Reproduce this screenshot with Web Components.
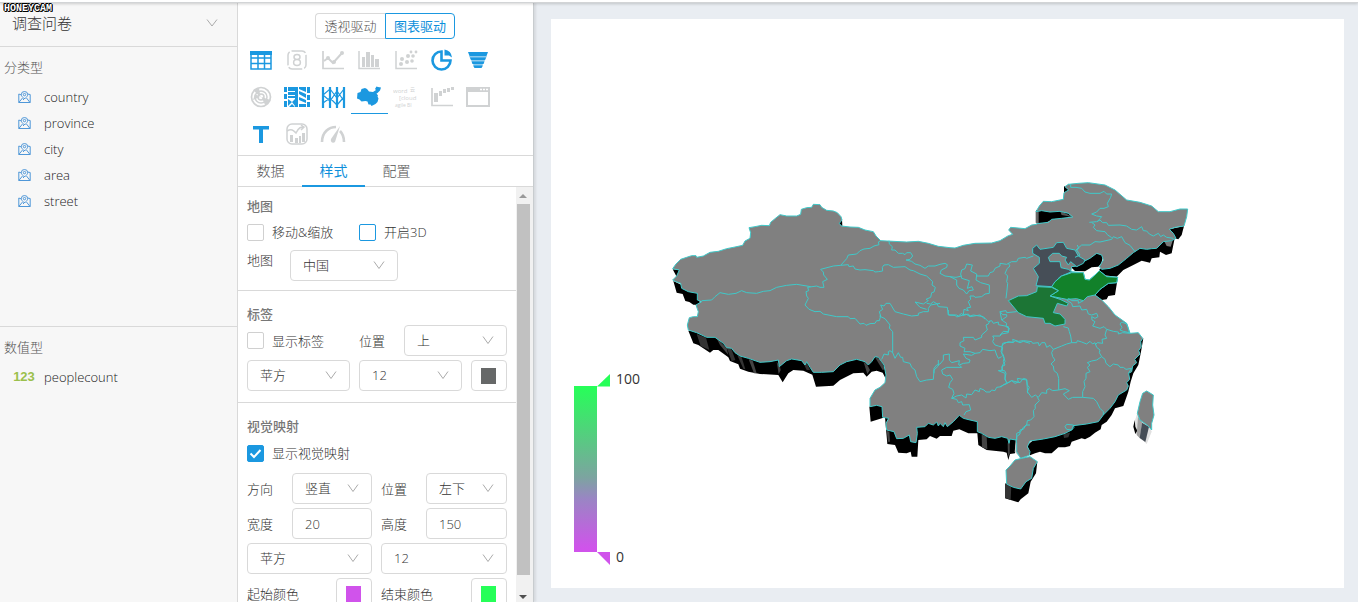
<!DOCTYPE html>
<html lang="zh-CN">
<head>
<meta charset="utf-8">
<title>调查问卷</title>
<style>
html, body { margin: 0; height: 100%; }
body { font: 300 13px/20px "Open Sans", "Noto Sans CJK SC", sans-serif; color: #333; background: #e9edf2; overflow: hidden; }
</style>
</head>
<body>
<bi-app></bi-app>

<template id="t-app">
<style>
:host { display: flex; flex-direction: column; height: 100vh; position: relative; }
.top { flex: none; height: 2px; background: #fff; border-bottom: 1px solid #d2d4d6; box-shadow: 0 1px 3px rgba(0,0,0,.18); z-index: 2; }
main { flex: 1; min-height: 0; display: grid; grid-template-columns: 238px 296px minmax(0, 1fr); }
.mark { position: absolute; left: 4px; top: 3px; z-index: 3; font: bold 10px/11px "Liberation Mono", monospace; color: #fff; text-shadow: 1px 0 #000, -1px 0 #000, 0 1px #000, 0 -1px #000, 1px 1px #000, -1px -1px #000; }
</style>
<div class="top"></div>
<span class="mark">HONEYCAM</span>
<main>
  <field-panel></field-panel>
  <config-panel></config-panel>
  <chart-stage></chart-stage>
</main>
</template>

<template id="t-fields">
<style>
:host { display: flex; flex-direction: column; min-height: 0; overflow: hidden; background: #f7f7f7; border-right: 1px solid #d9d9d9; }
header { flex: none; box-sizing: border-box; height: 44px; padding: 0 19px 4px 12px; border-bottom: 1px solid #d9d9d9; display: flex; align-items: center; justify-content: space-between; font-size: 15px; }
header svg { width: 12px; height: 8px; fill: none; stroke: #aaa; }
section { padding: 10px 4px 0; }
.dims { flex: none; box-sizing: border-box; height: 280px; border-bottom: 1px solid #d9d9d9; }
h2 { margin: 0 0 7px; font-size: 13px; font-weight: 300; color: #555; }
ul { margin: 0; padding: 0; list-style: none; }
</style>
<header><span>调查问卷</span><svg viewBox="0 0 12 8"><path d="M1 .5 6 7 11 .5"/></svg></header>
<section class="dims">
  <h2>分类型</h2>
  <ul>
    <li><field-item>country</field-item></li>
    <li><field-item>province</field-item></li>
    <li><field-item>city</field-item></li>
    <li><field-item>area</field-item></li>
    <li><field-item>street</field-item></li>
  </ul>
</section>
<section>
  <h2>数值型</h2>
  <ul><li><field-item kind="number">peoplecount</field-item></li></ul>
</section>
</template>

<template id="t-field">
<style>
:host { display: flex; align-items: center; height: 26px; color: #222; }
.icon { width: 40px; display: flex; justify-content: center; }
svg { width: 13px; height: 13px; fill: none; stroke: #4f97d8; stroke-width: 1; }
b { display: none; font: bold 13px/20px "Liberation Sans", sans-serif; color: #9bc04c; }
:host([kind=number]) svg { display: none; }
:host([kind=number]) b { display: block; }
</style>
<span class="icon"><svg viewBox="0 0 13 13"><path d="M3.500 4 .8 3v8.500h11.400V3.500L9.500 3M.8 11.500 4.500 7M5 9l2-2M8.500 7l3.500 4.500"/><path d="M6.500 8C4.500 6 3.300 5 3.300 3.600a3.200 3.100 0 0 1 6.400 0C9.700 5 8.500 6 6.500 8Z"/><circle cx="6.500" cy="3.600" r="1.200"/></svg><b>123</b></span>
<slot></slot>
</template>

<template id="t-config">
<style>
:host { display: flex; flex-direction: column; min-height: 0; box-sizing: border-box; background: #fff; border-right: 1px solid #c8cccf; box-shadow: 2px 0 2px rgba(0,0,0,.08); z-index: 1; }
.mode { display: flex; justify-content: center; padding: 10px 1px 3px 0; }
.mode button { width: 70px; height: 26px; padding: 0; font: inherit; line-height: 24px; background: #fff; color: #555; border: 1px solid #d9d9d9; }
.mode button:first-child { border-radius: 4px 0 0 4px; border-right: 0; }
.mode button:last-child { border-radius: 0 4px 4px 0; border-color: #1b98e0; color: #0d8fdb; font-weight: 400; }
.types { display: grid; grid-template-columns: repeat(7, 1fr); grid-auto-rows: 37px; padding: 0 37px 2px 5px; border-bottom: 1px solid #d9d9d9; }
.tabs { display: flex; height: 30px; border-bottom: 1px solid #d9d9d9; padding-left: 1px; }
.tabs button { width: 63px; height: 31px; padding: 0; border: 0; border-bottom: 2px solid transparent; background: none; font: inherit; font-size: 14px; line-height: 29px; color: #555; }
.tabs button.on { color: #0d8fdb; border-color: #1b98e0; font-weight: 400; }
.body { flex: 1; min-height: 0; display: flex; }
.form { flex: 1; overflow: hidden; }
section { padding: 13px 9px 11px; border-bottom: 1px solid #d9d9d9; }
section:first-child { padding: 9px 9px; }
h2 { margin: 0 0 1px; font-size: 13px; line-height: 20px; font-weight: 500; color: #777; }
section:first-child h2 { margin: 0; }
.row { display: flex; gap: 9px; margin-bottom: 4px; }
.row:last-child { margin-bottom: 0; }
.checks { height: 32px; margin-bottom: 4px; align-items: center; }
.checks.tight { margin-bottom: 2px; }
.half { display: grid; grid-template-columns: 125px 1fr; }
tick-box.w { width: 103px; }
pick-field.s { width: 103px; flex: none; }
pick-field.m { width: 151px; --label: 43px; }
pick-field.p { width: 148px; }
</style>
<div class="mode"><button>透视驱动</button><button>图表驱动</button></div>
<div class="types">
  <chart-type name="table" on></chart-type><chart-type name="card"></chart-type><chart-type name="line"></chart-type><chart-type name="bar"></chart-type><chart-type name="scatter"></chart-type><chart-type name="pie" on></chart-type><chart-type name="funnel" on></chart-type>
  <chart-type name="radar"></chart-type><chart-type name="sankey" on></chart-type><chart-type name="parallel" on></chart-type><chart-type name="map" on selected></chart-type><chart-type name="cloud"></chart-type><chart-type name="waterfall"></chart-type><chart-type name="frame"></chart-type>
  <chart-type name="text" on></chart-type><chart-type name="mixed"></chart-type><chart-type name="gauge"></chart-type>
</div>
<div class="tabs"><button>数据</button><button class="on">样式</button><button>配置</button></div>
<div class="body">
  <div class="form">
    <section>
      <h2>地图</h2>
      <div class="row checks tight"><tick-box class="w" label="移动&amp;缩放"></tick-box><tick-box label="开启3D" hot></tick-box></div>
      <div class="row"><pick-field class="m" label="地图" value="中国" raised></pick-field></div>
    </section>
    <section>
      <h2>标签</h2>
      <div class="row"><tick-box class="w" label="显示标签"></tick-box><pick-field class="p" label="位置" value="上"></pick-field></div>
      <div class="row"><pick-field class="s" title="字体" value="苹方"></pick-field><pick-field class="s" title="字号" value="12"></pick-field><color-field title="颜色" color="#666868"></color-field></div>
    </section>
    <section>
      <h2>视觉映射</h2>
      <div class="row checks"><tick-box label="显示视觉映射" checked></tick-box></div>
      <div class="row half"><pick-field label="方向" value="竖直"></pick-field><pick-field label="位置" value="左下"></pick-field></div>
      <div class="row half"><text-field label="宽度" value="20"></text-field><text-field label="高度" value="150"></text-field></div>
      <div class="row half"><pick-field title="字体" value="苹方"></pick-field><pick-field title="字号" value="12"></pick-field></div>
      <div class="row half"><color-field label="起始颜色" color="#d053eb"></color-field><color-field label="结束颜色" color="#26ff58"></color-field></div>
    </section>
  </div>
  <scroll-rail></scroll-rail>
</div>
</template>

<template id="t-rail">
<style>
:host { display: flex; flex-direction: column; align-items: flex-start; width: 15px; padding: 0 1px; background: #f1f1f1; }
i { flex: none; width: 0; height: 0; border: 4px solid transparent; }
.up { border-bottom-color: #999; border-top: 0; margin: 7px 2px 6px; }
.down { border-top-color: #505050; border-bottom: 0; margin: auto 2px 3px; }
.thumb { width: 13px; flex: 0 1 371px; background: #c1c1c1; }
</style>
<i class="up"></i><div class="thumb"></div><i class="down"></i>
</template>

<template id="t-tick">
<style>
:host { display: flex; align-items: center; height: 31px; }
label { display: flex; align-items: center; gap: 8px; white-space: nowrap; }
.box { display: grid; width: 17px; height: 17px; }
.box > * { grid-area: 1 / 1; }
input { appearance: none; box-sizing: border-box; margin: 0; width: 17px; height: 17px; border: 1px solid #d0d0d0; border-radius: 2px; background: #fff; }
:host([hot]) input { border-color: #1b98e0; }
input:checked { background: #1b98e0; border-color: #1b98e0; }
svg { width: 17px; height: 17px; fill: none; stroke: none; stroke-width: 2; pointer-events: none; }
input:checked + svg { stroke: #fff; }
</style>
<label><span class="box"><input type="checkbox"><svg viewBox="0 0 17 17"><path d="m3.500 8.500 3.500 3.500 6.500-7"/></svg></span><span class="text"></span></label>
</template>

<template id="t-pick">
<style>
:host { display: flex; align-items: center; min-width: 0; }
label { flex: none; width: var(--label, 45px); }
label:empty { display: none; }
:host([raised]) label { align-self: flex-start; }
.box { flex: 1; min-width: 0; display: grid; align-items: center; justify-items: end; }
.box > * { grid-area: 1 / 1; }
select { appearance: none; box-sizing: border-box; width: 100%; height: 31px; margin: 0; padding: 0 12px 1px; border: 1px solid #d9d9d9; border-radius: 4px; background: #fff; font: inherit; color: #333; }
svg { width: 12px; height: 9px; margin-right: 13px; fill: none; stroke: #aaa; pointer-events: none; }
</style>
<label for="f"></label><div class="box"><select id="f"><option></option></select><svg viewBox="0 0 12 9"><path d="M1 .500 6 7.500 11 .500"/></svg></div>
</template>

<template id="t-text">
<style>
:host { display: flex; align-items: center; min-width: 0; }
label { flex: none; width: 45px; }
input { flex: 1; min-width: 0; box-sizing: border-box; height: 31px; padding: 0 12px; border: 1px solid #d9d9d9; border-radius: 4px; font: inherit; color: #333; background: #fff; }
</style>
<label for="f"></label><input id="f" type="text">
</template>

<template id="t-color">
<style>
:host { display: flex; align-items: center; justify-content: space-between; }
button { box-sizing: border-box; width: 36px; height: 31px; padding: 0 1px 0 0; border: 1px solid #d9d9d9; border-radius: 4px; background: #fff; display: grid; place-items: center; }
i { width: 15px; height: 16px; }
</style>
<label for="f"></label><button id="f"><i></i></button>
</template>

<template id="t-stage">
<style>
:host { display: block; min-width: 0; padding: 16px 14px 14px 17px; }
.sheet { box-sizing: border-box; height: 100%; background: #fff; padding-left: 23px; display: flex; align-items: flex-start; overflow: hidden; }
color-scale { flex: none; width: 86px; align-self: flex-end; margin-bottom: 18px; }
china-map { flex: 0 1 540px; margin-top: 151px; }
</style>
<div class="sheet"><color-scale></color-scale><china-map></china-map></div>
</template>

<template id="t-scale">
<style>
:host { display: grid; grid-template-columns: 23px 13px 1fr; height: 199px; font-size: 14px; font-weight: 400; color: #333; }
.bar { margin: 15px 0 18px; background: linear-gradient(#26ff58, #7ca4a0 55%, #9a85c4 68%, #d053eb 98%); }
.handles { display: flex; flex-direction: column; justify-content: space-between; padding: 3px 0 5px; }
svg { width: 13px; height: 13px; }
.values { display: flex; flex-direction: column; justify-content: space-between; padding: 0 0 5px 6px; }
.values span { line-height: 16px; }
</style>
<div class="bar"></div>
<div class="handles"><svg viewBox="0 0 13 13"><path fill="#26ff58" d="M0 12.500 13 0v12.500Z"/></svg><svg viewBox="0 0 13 13"><path fill="#d053eb" d="M0 0h13v13Z"/></svg></div>
<div class="values"><span>100</span><span>0</span></div>
</template>

<template id="t-map">
<style>
:host { display: block; min-width: 0; }
svg { display: block; width: 100%; height: auto; }
.land { fill: #808080; stroke: #3fc9c9; stroke-width: 3; stroke-linejoin: round; }
.lines { fill: none; stroke: #3fc9c9; stroke-width: 3; stroke-linejoin: round; }
</style>
<svg viewBox="0 0 1620 1020" role="img" aria-label="中国">
<g id="walls"></g>
<path class="land" id="main"/>
<g id="regions"></g>
<g class="lines" id="borders"></g>
</svg>
</template>

<script>
const tpl = id => document.getElementById(id).content.cloneNode(true);
class Part extends HTMLElement {
  constructor() { super(); this.attachShadow({ mode: 'open' }).append(tpl(this.constructor.tpl)); }
  $(s) { return this.shadowRoot.querySelector(s); }
}
const define = (name, id, ready) => customElements.define(name, class extends Part {
  static tpl = id;
  connectedCallback() { if (ready) ready(this); }
});

define('field-item', 't-field');
define('scroll-rail', 't-rail');
define('color-scale', 't-scale');
define('tick-box', 't-tick', e => {
  e.$('.text').textContent = e.getAttribute('label');
  e.$('input').checked = e.hasAttribute('checked');
});
const nameField = (e, control) => {
  e.$('label').textContent = e.getAttribute('label') || '';
  if (e.title) control.setAttribute('aria-label', e.title);
};
define('pick-field', 't-pick', e => {
  nameField(e, e.$('select'));
  e.$('option').textContent = e.getAttribute('value');
});
define('text-field', 't-text', e => {
  nameField(e, e.$('input'));
  e.$('input').value = e.getAttribute('value');
});
define('color-field', 't-color', e => {
  nameField(e, e.$('button'));
  e.$('i').style.background = e.getAttribute('color');
});

// Chart type glyphs on a 26 x 24 grid; "s" marks stroked shapes, "f" filled ones.
const glyphs = {
  table: '<path class="f" d="M2 3h22v4H2z"/><path class="s" stroke-width="1.500" d="M3 4h20v17H3zM3 10h20M3 15.500h20M10 6v15M16.500 6v15"/>',
  card: '<rect class="s" x="4" y="3" width="18" height="18" rx="4" stroke-width="1.500" stroke-dasharray="14 2"/><path class="s" stroke-width="1.500" d="M13 6.500c-4 0-4 5 0 5s4-5 0-5Zm0 5c-4.500 0-4.500 6 0 6s4.500-6 0-6Z"/>',
  line: '<path class="s" stroke-width="1.700" d="M3 3v17.500h21"/><path class="s" stroke-width="2" d="m4 13 4-3 5 5 9-10"/><circle class="f" cx="8" cy="10" r="2"/><circle class="f" cx="14" cy="14" r="2"/><circle class="f" cx="22" cy="5" r="2"/>',
  bar: '<path class="s" stroke-width="1.500" d="M3 3v17.500h21"/><path class="f" d="M6 9h3v10H6zM10 4h4v15h-4zM15 7h3v12h-3zM19 11h4v8h-4z"/>',
  scatter: '<path class="s" stroke-width="1.500" d="M3 3v17.500h21"/><g class="f"><circle cx="8" cy="16" r="2"/><circle cx="9" cy="11" r="2"/><circle cx="14" cy="14" r="2"/><circle cx="15" cy="8" r="2"/><circle cx="19" cy="13" r="1.800"/><circle cx="20" cy="8" r="1.800"/><circle cx="18" cy="4" r="1.400"/><circle cx="23" cy="4" r="1.400"/></g>',
  pie: '<path class="s" stroke-width="2.600" d="M12.500 3.500a9 9 0 1 0 9 9h-9z"/><path class="f" d="M15.500 1.500A9 9 0 0 1 23 9.500L20 7.500h-4.500z"/>',
  funnel: '<path class="f" opacity=".5" d="M4 8h18l-5 10H9z"/><path class="f" d="M3 4h20l-1.500 4h-17zM5 9.500h16l-1 2.500H6zM6.500 13.500h13l-1 2.500h-11zM8 17.500h10L16.500 20h-7z"/>',
  radar: '<circle class="s" cx="13" cy="12" r="9.500" stroke-width="1.700"/><circle class="s" cx="13" cy="12" r="6" stroke-width="1.500"/><circle class="s" cx="13" cy="12" r="3" stroke-width="1.500"/><path class="f" d="M12.500 12 5 5l6-2zM13.500 12l9 3-5 6zM12 12l-7 3 2-6z"/>',
  sankey: '<path class="f" d="M0 2h3v5H0zM0 9h3v5H0zM0 16h3v6H0zM4 2h7v4H4zM4 7h7v3H4zM4 11h7v2H4zM4 14l4 3-4 4zM11 14v7l-3-4zM5 22l3-3 3 3zM11 2h3v20h-3zM15 2h7v5l-7-3zM15 6l7 3v4l-7-4zM15 12l7 3v3l-7-3zM15 19h7v3h-7zM23 2h3v6h-3zM23 10h3v5h-3zM23 17h3v5h-3z"/>',
  parallel: '<path class="s" stroke-width="2.200" d="M3 2v21M10 2v21M17 2v21M24 2v21"/><path class="s" stroke-width="1.200" d="m3 10 7-6 7 9 7-9M3 10l7 6 7-10 7 10M3 18l7-5 7 7 7-8"/>',
  map: '<path class="f" d="m1.500 8 3-1L5.500 4 9 3l2 1 2 2.500 4 .5 3-2-1-1 1.500-2.500L22 2l3 .5-1 3-2.500 2.500-1 .5 1.500 2-.5 1 1 2-1 3.500-2 2-3 1.500-1 .5-1-1.500h-2l-1-3-2-.5-4 .5-2-2-2.500-1z"/>',
  cloud: '<g class="f" font-family="Open Sans, sans-serif" font-size="6" font-weight="400"><text x="0" y="8">word</text><text x="17" y="6" font-size="5">云</text><text x="6" y="15">[cloud</text><text x="2" y="22" font-size="5">agile BI</text></g>',
  waterfall: '<path class="s" stroke-width="1.700" d="M3 3v17.500h21"/><path class="f" d="M5 8h4v9H5zM10 6h3v5h-3zM14 4h3v4h-3zM18 3h3v4h-3zM22 2h3v3h-3z"/>',
  frame: '<path class="s" stroke-width="2" d="M2 3h22v18H2z"/><path class="f" d="M2 3h22v4H2z"/><path stroke="#fff" stroke-width="1.500" stroke-dasharray="2 1" d="M15 4.500h8"/>',
  text: '<path class="f" d="M5 4h16v3.500h-6V21h-4V7.500H5z"/>',
  mixed: '<rect class="s" x="3" y="2" width="20" height="20" rx="5" stroke-width="1.500"/><path class="s" stroke-width="1.500" d="M3 9c5-3 7 0 9 2 3-6 5-6 8-6m-3-2 3 2-3 3"/><path class="f" d="M6 13h3v7H6zM11 16h3v5h-3zM15 14h2v7h-2zM18 11h3v9h-3z"/>',
  gauge: '<path class="s" stroke-width="2.600" d="M2 20C2 10 9 5 16 5M20 9c3 3 4 6 4 11"/><path class="f" d="M20 4 15 20c-2 2-5 0-4-3z"/>'
};
customElements.define('chart-type', class extends HTMLElement {
  connectedCallback() {
    const name = this.getAttribute('name');
    this.attachShadow({ mode: 'open' }).innerHTML = `<style>
      :host { display: block; color: #d0d2d3; }
      :host([on]) { color: #1b98e0; }
      button { width: 100%; height: 35px; padding: 2px 0 0; border: 0; border-bottom: 1px solid transparent; background: none; color: inherit; display: grid; place-items: center; }
      :host([selected]) button { border-color: #1b98e0; }
      svg { width: 26px; height: 24px; }
      .s { fill: none; stroke: currentColor; } .f { fill: currentColor; }
    </style><button aria-label="${name}"><svg viewBox="0 0 26 24">${glyphs[name]}</svg></button>`;
  }
});

// Map geometry, three units to a pixel. Each tile is [dx, dy, points].
const shift = ([dx, dy, pts]) => pts.trim().split(/\s+/).map(p => {
  const [x, y] = p.split(',').map(Number);
  return `${x + dx},${y + dy}`;
}).join(' ');
const W = [0, 0], C = [600, 0], E = [1020, 0], SW = [600, 420], SE = [1020, 420];
const outline = [
  [...W, '38,296 48,282 62,268 80,262 95,257 108,257 110,262 130,258 150,247 175,244 200,236 225,231 248,226 255,213 270,205 272,188 267,173 285,170 305,166 328,167 332,157 345,146 360,134 380,138 410,138 422,133 424,118 440,113 455,112 460,103 480,104 485,112 500,121 520,123 532,128 543,140 546,150 538,160 544,168 570,171 595,172 615,180 640,185 648,198 662,212'],
  [...C, '100,214 140,216 175,214 205,220 235,229 270,233 285,234 310,226 345,220 395,219 420,212 445,197 458,193 446,180 452,172 495,176 515,165 530,163'],
  [...E, '110,161 145,157 155,148 185,145 218,141 205,130 180,124 150,126 125,122 108,125 118,108 130,94 155,95 190,88 192,68 206,60 195,50 205,43 235,40 265,38 315,45 345,60 380,90 420,97 455,108 475,125 510,125 540,117 563,117 560,140 552,168 525,172 508,178 520,190 528,205 515,212 490,215 470,235 455,236 440,238 420,235 400,248 380,265 355,285 330,295 305,298 298,290 310,270 305,255 290,250 270,265 250,275 232,288 215,290 212,305 250,308 255,328 268,330 285,315 298,302 320,320 353,322 350,338 325,340 300,358 285,375 305,390 325,410 345,435 380,460'],
  [...SE, '390,70 415,68 428,85 422,95 424,110 416,122 420,132 404,148 410,158 398,168 395,185 386,190 389,208 380,218 385,228 380,240 355,255 345,275 330,295 310,315 295,335 260,342 220,347 215,360 195,370 165,380 130,387 90,393 82,410 90,425 88,436 62,445 50,425 50,400 48,388'],
  [...SW, '468,390 450,387 447,400 443,385 425,380 405,385 385,382 365,370 352,365 352,335 330,330 310,325 298,316 280,335 262,350 255,338 250,350 240,340 235,348 230,336 220,345 205,340 195,350 170,352 172,370 168,398 152,395 148,375 130,385 110,386 102,365 80,360 78,340 86,325 68,322 66,290 50,286 30,290 30,265 45,240 60,232 75,218 78,195 72,165 65,155'],
  [...W, '655,562 645,560 635,575 625,585 615,575 590,568 560,575 540,585 520,605 485,607 460,607 450,592 440,575 435,585 425,572 395,567 380,572 358,590 355,570 330,575 300,577 265,565 240,558 225,548 215,535 200,533 190,520 165,502 140,502 110,488 85,480 82,465 88,443 100,440 112,440 115,425 108,405 125,395 112,390 112,370 85,365 65,355 62,340 48,335 38,330 50,318 58,300']
];
const walls = [
  [W, '#000', '38,298 50,320 62,300'], [W, '#000', '40,333 50,368 68,372 76,393 88,396 100,404 120,404 116,372 65,345'],
  [W, '#000', '538,155 546,148 547,168 534,165'],
  [W, '#000', '85,482 100,520 115,525 150,548 160,540 175,540 205,562 210,573 235,583 240,596 265,605 300,612 355,615 368,637 385,610 400,600 430,602 457,614 468,650 520,647 540,630 580,610 610,608 620,620 635,605 650,602 668,608 678,628 680,600 665,560 600,500 300,480'],
  [W, '#333', '110,492 122,528 148,540 138,503'], [W, '#333', '200,533 215,573 226,570 214,536'], [W, '#444', '170,505 200,535 205,555 180,525'],
  [W, '#333', '232,556 250,596 256,598 245,562'], [W, '#444', '266,568 282,610 290,610 278,572'], [W, '#444', '350,575 356,612 362,600 360,590'],
  [W, '#333', '428,575 440,600 450,600 440,577'], [W, '#444', '610,574 622,612 630,600 622,585'], [W, '#444', '645,562 668,600 675,598 662,568'],
  [SW, '#000', '28,290 32,335 75,322 82,402 105,405 115,428 140,430 152,425 155,440 172,440 175,390 200,388 210,378 230,386 240,378 275,378 280,362 298,358 325,370 352,370 355,405 380,420 430,425 440,428 445,450 450,432 465,430 468,385 350,300 170,320 70,280'],
  [SW, '#444', '365,372 366,412 382,418 380,380'], [SW, '#444', '80,362 84,395 90,395 88,365'], [SW, '#444', '443,400 444,440 449,430 449,395'],
  [SE, '#c8c8c8', '48,388 44,425 62,445 70,440'],
  [SE, '#000', '82,405 90,436 105,430 120,425 135,430 155,430 175,412 195,412 210,408 215,395 245,385 255,388 270,380 285,368 302,358 305,345 320,335 335,315 345,295 370,288 385,245 392,215 400,190 415,165 423,125 430,85 300,200 150,350'],
  [SE, '#333', '190,372 192,384 205,382 210,368'],
  [E, '#000', '508,178 552,168 545,195 535,208 522,205'],
  [E, '#000', '524,205 515,250 498,255 480,245 478,262 455,265 450,278 425,272 400,285 370,300 350,320 305,315 298,298 400,230'], [E, '#777', '492,212 500,228 512,230 518,212'],
  [E, '#000', '353,325 345,375 325,378 320,388 305,390 285,375 300,350'],
  [E, '#000', '212,290 250,275 290,250 310,255 304,280 295,290 275,292 255,304 225,303'],
  [E, '#000', '108,120 125,120 150,124 180,122 205,130 218,141 150,152 135,160 110,160'], [E, '#555', '180,122 218,141 185,135'], [E, '#666', '107,123 116,125 116,160 107,158'],
  [E, '#000', '192,48 208,60 192,74'],
  [SE, '#000', '18,520 15,565 55,577 62,568 85,550 92,515 108,490 112,455 60,500'], [SE, '#333', '15,520 15,563 32,570 34,526'],
  [SE, '#e0e0e0', '412,310 402,340 406,370 440,402 455,365 440,330'], [SE, '#000', '404,330 400,350 406,372 412,362 406,350'], [SE, '#a0a0a0', '414,320 410,375 420,385 426,335'], [SE, '#454d56', '426,338 419,384 436,396 447,350']
];
const regions = [
  [E, '#464e57', '98,235 110,225 120,238 160,232 170,218 190,217 200,235 225,240 235,258 255,270 250,280 230,290 212,275 205,285 195,270 200,262 185,258 178,250 158,250 145,262 150,275 180,275 183,293 205,298 215,305 180,320 155,350 108,347 115,320 100,295 118,280 118,262 98,250'],
  [E, '#12812a', '155,350 165,335 185,318 215,308 250,308 255,328 268,330 285,315 298,302 320,320 353,322 350,338 325,340 300,358 285,375 262,380 250,392 230,386 200,388 185,385 150,378 175,362'],
  [E, '#1c7535', '25,392 55,378 80,377 110,365 112,350 155,352 175,362 150,378 180,388 205,400 200,408 172,400 160,428 180,432 195,448 195,462 165,468 150,460 135,460 130,445 80,440 55,428'],
  [SE, '#808080', '18,480 30,468 45,450 65,445 90,440 112,455 100,475 95,505 78,515 62,537 40,532 20,522'],
  [SE, '#808080', '412,310 420,275 428,250 440,243 460,255 458,285 462,315 455,340 455,360 445,348 420,330']
];
const borders = [
  [W, '662,212 655,216 657,224 642,228 630,235 612,237 600,242 590,252 565,255 560,266 542,286 520,288 482,298 490,306 491,315 502,328 488,335 492,352 480,352 470,348 443,352'],
  [W, '125,392 155,390 165,380 180,368 205,373 228,370 245,362 260,368 290,370 310,364 330,362 350,352 380,346 410,343 452,350'],
  [W, '443,352 446,362 438,365 440,378 445,385 435,405 447,418 465,425 480,424 490,432 530,440 565,440 570,446 585,445 600,462 612,460 618,466 630,461 645,460 650,452 658,452 662,438 658,425 668,418 662,405 672,408 678,400 690,400 705,425 730,432 755,438 775,436 775,430 790,425 805,425 805,415 812,405 840,400'],
  [W, '542,286 565,284 567,290 580,288 585,297 600,300 615,299 640,302 645,306 655,305 668,303 667,292 672,285 685,284 700,292 735,290 750,300 760,302 780,312 800,318 818,335 816,345 826,352 822,366 815,368 812,382 798,388 805,392 790,402 765,396 780,412 800,418'],
  [W, '687,212 688,222 697,230 695,240 705,240 715,250 728,250 735,254 740,248 752,248 758,258 750,268 738,270 755,274 765,282 780,286 795,295 805,288 825,288 840,283'],
  [W, '658,438 675,446 690,465 688,474 698,485 698,548 690,542 685,545 685,555 672,552 665,568'],
  [W, '698,548 705,565 715,548 722,562 728,562 730,575 750,580 755,592 765,600 770,620 780,635 800,630 820,628 822,600 835,588 835,570'],
  [C, '240,283 255,280 262,284 260,292 244,300 240,310 255,318 270,320 290,330 290,345 297,355 310,360 320,372 327,362 340,360 336,350 322,355 328,332 305,325 302,312 305,300 315,296 320,282 337,285 332,303 350,312 350,318 385,318 390,308 400,305 405,295 420,288 420,280 440,283 455,275 470,275 475,265 495,262 500,265 520,258'],
  [C, '350,315 348,330 362,338 388,345 388,370 375,372 365,380 345,382 342,378 330,378 332,388 325,395 332,412 320,414 325,422 312,418 310,435'], [C, '445,280 450,288 442,295 435,310 443,318 440,335 443,340 441,360 438,385'], [C, '270,320 288,322 305,318'],
  [C, '200,400 212,402 220,395 232,402 235,410 262,412 265,435 285,436 290,441 310,435 318,432 330,440 360,435 375,447'], [C, '470,425 440,428 438,422 420,425 428,434 440,434 440,440 425,450'],
  [E, '232,225 236,235 230,240 240,255 225,262'], [E, '228,240 245,225 270,225 285,215 300,216 335,208 340,200 352,205 365,200 375,218 390,226 405,245'],
  [E, '268,157 290,155 300,150 308,158 320,158 325,166 360,165 380,168 395,178 410,180 425,170 430,182 440,183 448,192 460,198 475,190 482,200 490,195 500,202 520,205'], [E, '275,157 285,165 280,172 290,182 315,185 322,194 335,203'],
  [E, '205,43 212,44 212,52 228,52 245,55 255,66 270,70 300,70 312,64 320,72 335,72 332,82 322,100 325,110 312,115 300,115 290,126 275,132 290,138 305,140 300,146 292,155'],
  [E, '200,390 215,400 218,410 240,408 245,420 260,418 265,432 275,435 290,430 294,440 285,445 275,440 276,450 285,455 278,468 300,475 312,470 320,478'], [E, '205,385 215,392 235,392 235,400 250,392'],
  [SE, '190,50 205,54 208,65 212,78 215,98'], [SE, '0,5 5,30 20,40 18,50 28,55 25,65 10,64 0,75'],
  [SE, '5,115 8,100 15,98 40,96 38,88 55,94 70,92 95,95 98,100 115,98 118,108 125,98 135,98 140,112 150,106 160,118 185,108 200,102 215,98 230,98 232,92 245,96 260,102 270,94 278,102 285,98 290,112 300,120 298,128 305,140 290,150 275,153 262,158 270,165 262,172 270,185 258,190 258,205 252,215 255,230 248,245 248,262'],
  [SE, '160,118 155,128 158,140 165,150 153,162 160,168 162,182 172,190 176,205 176,240'],
  [SE, '0,230 8,226 18,222 35,212 45,220 55,216 52,205 80,210 82,225 88,232 82,245 95,262 106,255 115,262 125,248 140,250 140,240 148,236 158,242 176,240 195,236 208,242 190,252 205,268 218,262 248,262 280,265 290,275 300,295 310,305 310,315'],
  [SE, '112,262 118,272 105,285 106,295 100,302 102,320 92,330 82,332 80,345 70,352 62,365 50,370 50,390'], [SE, '5,115 3,125 10,135 15,155 8,165 5,182 14,182 18,190 15,205 20,220'],
  [SE, '305,140 315,148 318,160 330,170 340,162 355,165 360,172 370,172 378,178 395,175 385,190'], [SE, '285,105 292,98 308,100 306,88 320,85 315,75 320,58 340,64 355,66 355,72 368,68 390,70'], [SE, '360,42 365,36 380,42 384,52 388,68 370,64 360,60 366,52 360,42'],
  [SE, '195,350 200,343 220,345 222,352 215,360 200,358 195,350'],
  [SW, '265,0 265,14 270,15 290,15 295,18 305,10 310,16 325,12 330,18 340,15 370,20 385,35 395,32 400,40 415,36 415,44 445,50 445,68 425,72 420,78 398,78 402,85 398,95 405,105 415,108 428,112 425,130 432,145 430,155 435,165 425,170 428,180 415,182 435,190 435,210 440,215'],
  [SW, '390,32 385,42 378,45 382,60 365,75 365,82 345,90 340,82 310,82 312,92 300,98 300,108 315,115 312,125 330,125 345,130 360,128 368,118 390,122 405,120 410,135 415,145 425,140'],
  [SW, '345,130 335,136 310,132 318,145 330,150 328,158 310,160 298,165 305,172 260,172 245,180 248,192 260,198 270,195 278,208 270,218 266,232 278,238 282,250 275,265 290,258 305,255 318,264 320,252 335,254 345,240 358,245 360,235 372,240 378,246 390,246 395,240 405,242 410,232 425,230 430,224 440,220 455,212 480,218 490,205 500,208 503,250'],
  [SW, '275,265 290,268 295,278 305,275 308,285 328,284 332,300 318,305 312,315'], [SW, '222,190 222,175 230,165 240,162 250,150 250,135 268,132 268,150 275,158 298,152 296,165'],
  [SW, '425,110 430,102 445,95 460,98 465,92 480,98 490,94 510,100'], [SW, '470,390 470,380 480,372 480,360 490,358 498,345 510,345']
];
define('china-map', 't-map', e => {
  const shape = (tile, fill, pts) => `<polygon fill="${fill}" points="${shift([...tile, pts])}"/>`;
  e.$('#main').setAttribute('d', 'M' + outline.map(shift).join(' ') + 'Z');
  e.$('#walls').innerHTML = walls.map(w => shape(...w)).join('');
  e.$('#regions').innerHTML = regions.map(([tile, fill, pts]) => `<polygon class="land" style="fill:${fill}" points="${shift([...tile, pts])}"/>`).join('');
  e.$('#borders').innerHTML = borders.map(([tile, pts]) => `<polyline points="${shift([...tile, pts])}"/>`).join('');
});
define('field-panel', 't-fields');
define('config-panel', 't-config');
define('chart-stage', 't-stage');
define('bi-app', 't-app');
</script>
</body>
</html>
